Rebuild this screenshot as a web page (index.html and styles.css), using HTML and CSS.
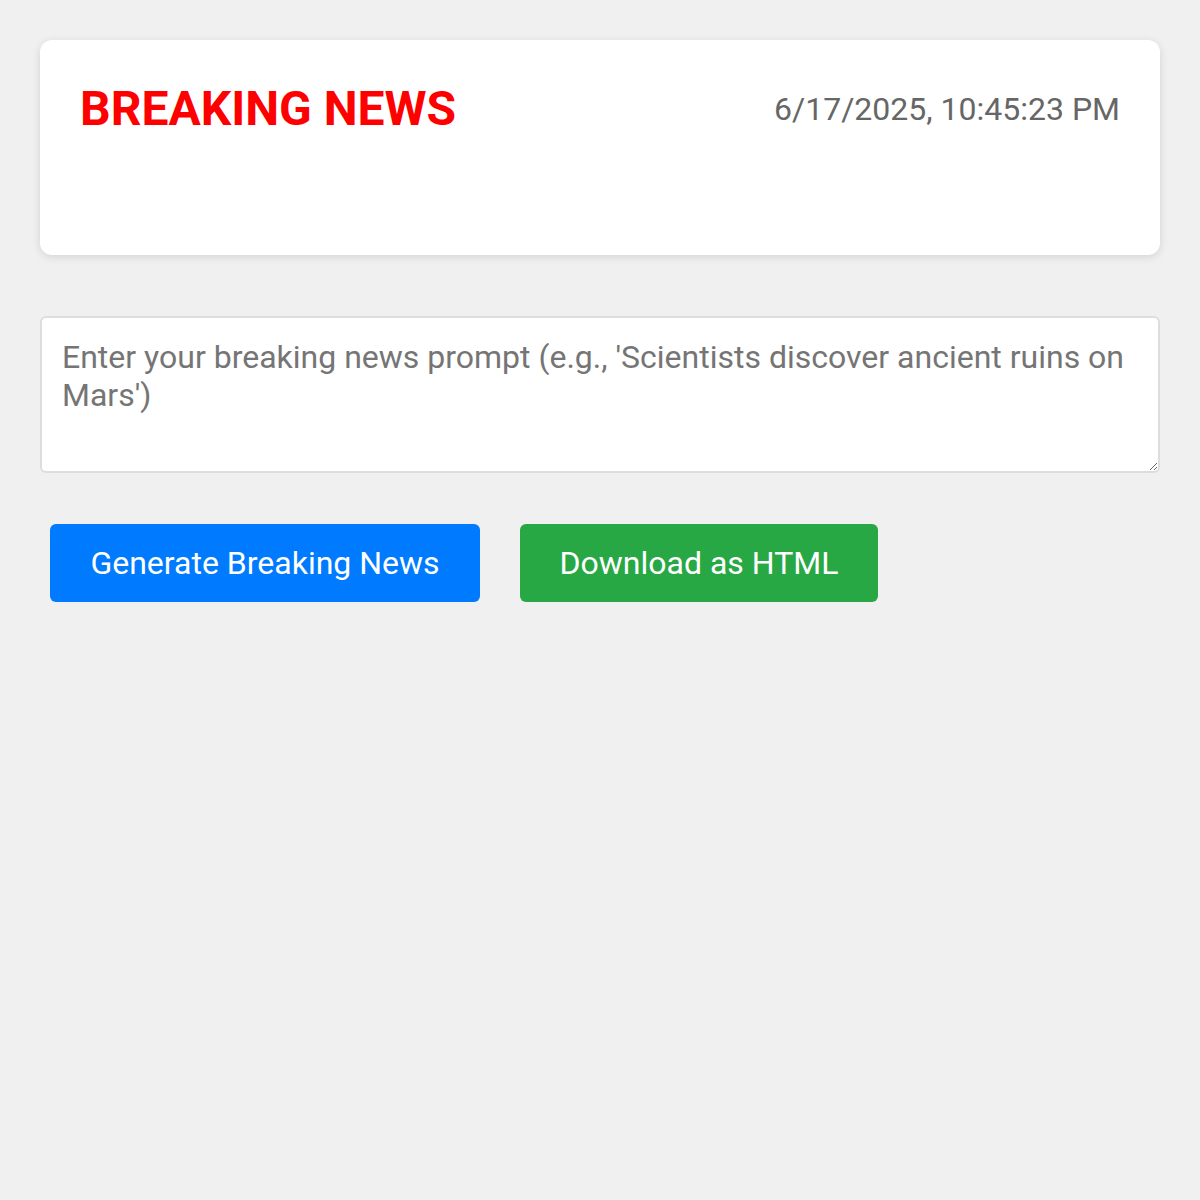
FILE: index.html
```html
<!DOCTYPE html>
<html lang="en">
<head>
<meta charset="utf-8">
<title>Breaking News Generator</title>
<link rel="stylesheet" href="styles.css">
</head>
<body>
<main class="page">
  <section class="card">
    <header class="card-header">
      <h1 class="title">BREAKING NEWS</h1>
      <div class="timestamp">6/17/2025, 10:45:23 PM</div>
    </header>
    <div class="news-body"></div>
  </section>
  <textarea class="prompt" placeholder="Enter your breaking news prompt (e.g., 'Scientists discover ancient ruins on Mars')"></textarea>
  <div class="actions">
    <button class="btn btn-blue" type="button">Generate Breaking News</button>
    <button class="btn btn-green" type="button">Download as HTML</button>
  </div>
</main>
</body>
</html>
```
FILE: styles.css
```css
html, body {
  margin: 0;
  padding: 0;
}
body {
  background: #f0f0f0;
  font-family: Roboto, "Liberation Sans", Arial, sans-serif;
}
.page {
  padding: 40px;
  display: flex;
  flex-direction: column;
}
.card {
  background: #ffffff;
  border-radius: 12px;
  box-shadow: 0 2px 8px rgba(0, 0, 0, 0.12);
  padding: 40px;
  height: 215px;
  box-sizing: border-box;
}
.card-header {
  display: flex;
  justify-content: space-between;
  align-items: center;
}
.title {
  margin: 0;
  font-size: 48px;
  font-weight: 700;
  color: #ff0000;
  line-height: normal;
}
.timestamp {
  font-size: 32px;
  color: #666666;
}
.prompt {
  margin-top: 61px;
  height: 157px;
  box-sizing: border-box;
  padding: 20px;
  border: 2px solid #dddddd;
  border-radius: 6px;
  font-family: Roboto, "Liberation Sans", Arial, sans-serif;
  font-size: 32px;
  line-height: normal;
  background: #ffffff;
  color: #333333;
}
.prompt::placeholder {
  color: #757575;
}
.actions {
  display: flex;
  gap: 40px;
  margin-top: 51px;
  padding-left: 10px;
}
.btn {
  border: none;
  border-radius: 6px;
  color: #ffffff;
  font-family: Roboto, "Liberation Sans", Arial, sans-serif;
  font-size: 32px;
  line-height: normal;
  padding: 20px 0;
  height: 78px;
  box-sizing: border-box;
  white-space: nowrap;
  text-align: center;
  cursor: pointer;
}
.btn-blue {
  background: #007bff;
  width: 430px;
}
.btn-green {
  background: #28a745;
  width: 358px;
}
```
